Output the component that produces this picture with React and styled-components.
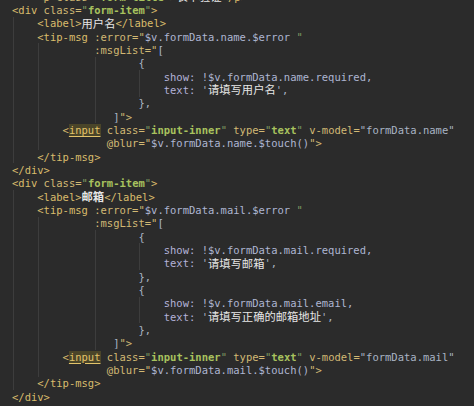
import React from 'react'
import styled, { createGlobalStyle } from 'styled-components'

const LINE = 13.34

const GlobalStyle = createGlobalStyle`
    html, body {
        margin: 0;
        padding: 0;
        background: #2b2b2b;
        overflow: hidden;
    }
`

const colors = {
    t: '#d9bc6c',
    a: '#d2b974',
    s: '#a8c25e',
    q: '#7f9a62',
    j: '#aeb6d2',
    k: '#b3b2d8',
    p: '#a9b4c4',
    w: '#e6e6e6',
}

const tag = (name) => [['t', name]]
const str = (name, value) => [['a', name + '='], ['q', '"'], ['s', value], ['q', '"']]
const jsAttr = (name, value) => [['a', name + '="'], ['j', value]]

const lines = [
    [4, [], [['t', '<p '], ...str('class', 'form-title'), ['t', '>'], ['w', '表单验证', true], ['t', '</p>']]],
    [0, [], [['t', '<div '], ...str('class', 'form-item'), ['t', '>']]],
    [4, [0], [['t', '<label>'], ['w', '用户名', true], ['t', '</label>']]],
    [4, [0], [['t', '<tip-msg '], ...jsAttr(':error', '$v.formData.name.$error '), ['q', '"']]],
    [13, [0, 4], [...jsAttr(':msgList', '[')]],
    [20, [0, 4, 13], [['p', '{']]],
    [24, [0, 4, 13, 20], [['k', 'show: '], ['j', '!$v.formData.name.required,']]],
    [24, [0, 4, 13, 20], [['k', 'text: '], ['p', "'"], ['w', '请填写用户名', true], ['p', "',"]]],
    [20, [0, 4, 13], [['p', '},']]],
    [16, [0, 4, 13], [['p', ']'], ['a', '">']]],
    [8, [0, 4], [['t', '<'], ['h', 'input'], ['t', ' '], ...str('class', 'input-inner'), ['t', ' '], ...str('type', 'text'), ['t', ' '], ['a', 'v-model='], ['p', '"formData.name"']]],
    [15, [0, 4], [...jsAttr('@blur', '$v.formData.name.$touch()'), ['a', '">']]],
    [4, [0], tag('</tip-msg>')],
    [0, [], tag('</div>')],
    [0, [], [['t', '<div '], ...str('class', 'form-item'), ['t', '>']]],
    [4, [0], [['t', '<label>'], ['w', '邮箱', true, true], ['t', '</label>']]],
    [4, [0], [['t', '<tip-msg '], ...jsAttr(':error', '$v.formData.mail.$error '), ['q', '"']]],
    [13, [0, 4], [...jsAttr(':msgList', '[')]],
    [20, [0, 4, 13], [['p', '{']]],
    [24, [0, 4, 13, 20], [['k', 'show: '], ['j', '!$v.formData.mail.required,']]],
    [24, [0, 4, 13, 20], [['k', 'text: '], ['p', "'"], ['w', '请填写邮箱', true], ['p', "',"]]],
    [20, [0, 4, 13], [['p', '},']]],
    [20, [0, 4, 13], [['p', '{']]],
    [24, [0, 4, 13, 20], [['k', 'show: '], ['j', '!$v.formData.mail.email,']]],
    [24, [0, 4, 13, 20], [['k', 'text: '], ['p', "'"], ['w', '请填写正确的邮箱地址', true], ['p', "',"]]],
    [20, [0, 4, 13], [['p', '},']]],
    [16, [0, 4, 13], [['p', ']'], ['a', '">']]],
    [8, [0, 4], [['t', '<'], ['h', 'input'], ['t', ' '], ...str('class', 'input-inner'), ['t', ' '], ...str('type', 'text'), ['t', ' '], ['a', 'v-model='], ['p', '"formData.mail"']]],
    [15, [0, 4], [...jsAttr('@blur', '$v.formData.mail.$touch()'), ['a', '">']]],
    [4, [0], tag('</tip-msg>')],
    [0, [], tag('</div>')],
]

const indentSegments = (indent, guides) => {
    const marks = [0, ...guides.filter((g) => g > 0), indent]
    const segs = []
    for (let i = 0; i < marks.length - 1; i++) {
        const len = marks[i + 1] - marks[i]
        if (len > 0) segs.push({ len, guide: guides.includes(marks[i]) })
    }
    return segs
}

const App = () => {
    return (
        <>
            <GlobalStyle />
            <Editor>
                {lines.map(([indent, guides, tokens], i) => (
                    <Line key={i}>
                        {indentSegments(indent, guides).map((seg, j) => (
                            <Indent key={j} $len={seg.len} $guide={seg.guide} />
                        ))}
                        {tokens.map(([kind, text, cjk, bold], j) => {
                            if (kind === 'h') return <Highlight key={j}>{text}</Highlight>
                            if (cjk) return <Cjk key={j} $bold={bold}>{text}</Cjk>
                            return <Token key={j} $c={colors[kind]} $bold={kind === 's'}>{text}</Token>
                        })}
                    </Line>
                ))}
            </Editor>
        </>
    )
}

const Editor = styled.div`
    margin-top: -10px;
    padding-left: 12px;
    font-family: "DejaVu Sans Mono", "Liberation Mono", monospace;
    font-size: 10.5px;
    color: #a9b7c6;
`

const Line = styled.div`
    display: flex;
    align-items: center;
    height: ${LINE}px;
    white-space: pre;
`

const Indent = styled.span`
    flex: none;
    align-self: stretch;
    width: ${(p) => p.$len}ch;
    box-sizing: border-box;
    border-left: 1px solid ${(p) => (p.$guide ? '#3d3d3d' : 'transparent')};
    margin-left: ${(p) => (p.$guide ? '1px' : '0')};
    margin-right: ${(p) => (p.$guide ? '-1px' : '0')};
`

const Token = styled.span`
    color: ${(p) => p.$c};
    font-weight: ${(p) => (p.$bold ? 700 : 400)};
`

const Cjk = styled.span`
    font-family: "Noto Sans CJK SC", sans-serif;
    font-size: 11.3px;
    line-height: 1;
    color: #e6e6e6;
    font-weight: ${(p) => (p.$bold ? 700 : 400)};
`

const Highlight = styled.span`
    color: #e2c36a;
    background: #4a4529;
    text-decoration: underline;
    text-underline-offset: 2px;
`

export default App
